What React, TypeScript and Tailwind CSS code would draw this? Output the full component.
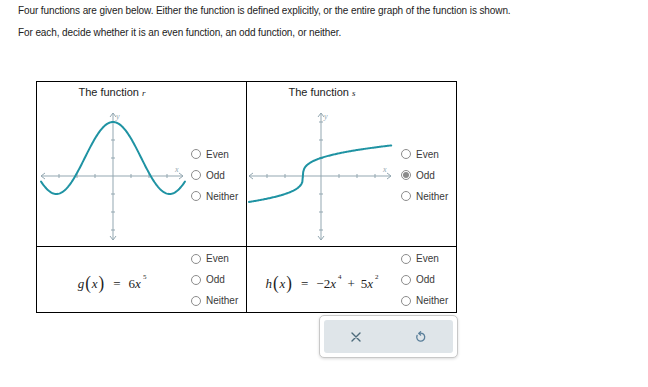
import React from "react";

const AXIS = "#93a7b1";
const CURVE = "#1f93a3";

function curvePath(f: (x: number) => number, ox: number, oy: number, from: number, to: number) {
  const pts: string[] = [];
  const steps = 160;
  for (let i = 0; i <= steps; i++) {
    const x = from + ((to - from) * i) / steps;
    const y = f(x);
    pts.push(`${(ox + x * 18).toFixed(2)},${(oy - y * 18).toFixed(2)}`);
  }
  return "M" + pts.join(" L");
}

function Graph({ ox, fn, from, to }: { ox: number; fn: (x: number) => number; from: number; to: number }) {
  const oy = 72;
  const ticks = [-3, -2, -1, 1, 2, 3];
  return (
    <svg width="150" height="142" viewBox="0 0 150 142" className="block shrink-0">
      <g stroke={AXIS} strokeWidth="1" fill="none">
        <line x1={ox - 72} y1={oy} x2={ox + 70} y2={oy} />
        <line x1={ox} y1={9} x2={ox} y2={136} />
        <polyline points={`${ox - 68},${oy - 3} ${ox - 72},${oy} ${ox - 68},${oy + 3}`} />
        <polyline points={`${ox + 66},${oy - 3} ${ox + 70},${oy} ${ox + 66},${oy + 3}`} />
        <polyline points={`${ox - 3},${13} ${ox},${9} ${ox + 3},${13}`} />
        <polyline points={`${ox - 3},${132} ${ox},${136} ${ox + 3},${132}`} />
        {ticks.map((t) => (
          <line key={"x" + t} x1={ox + t * 18} y1={oy - 2} x2={ox + t * 18} y2={oy + 2} />
        ))}
        {ticks.map((t) => (
          <line key={"y" + t} x1={ox - 2} y1={oy - t * 18} x2={ox + 2} y2={oy - t * 18} />
        ))}
      </g>
      <text x={ox + 3} y={15} fontSize="8" fontStyle="italic" fill={AXIS} fontFamily="Liberation Serif, serif">
        y
      </text>
      <text x={ox + 62} y={oy - 4} fontSize="8" fontStyle="italic" fill={AXIS} fontFamily="Liberation Serif, serif">
        x
      </text>
      <path d={curvePath(fn, ox, oy, from, to)} stroke={CURVE} strokeWidth="2" fill="none" strokeLinecap="round" />
    </svg>
  );
}

function Radios({ selected }: { selected?: string }) {
  return (
    <div className="flex flex-col gap-[8px] ml-[4px]">
      {["Even", "Odd", "Neither"].map((o) => (
        <label key={o} className="flex items-center gap-[5px] h-[13px] text-[10px] text-[#3a3a3a]">
          <span className="w-[10px] h-[10px] rounded-full border border-[#8c8c8c] bg-white flex items-center justify-center">
            {selected === o && <span className="w-[6px] h-[6px] rounded-full bg-[#8a8a8a]" />}
          </span>
          {o}
        </label>
      ))}
    </div>
  );
}

function Title({ name }: { name: string }) {
  return (
    <div className="w-[150px] h-[22px] pt-[3px] text-center text-[11px] leading-[14px] text-[#222]">
      The function{" "}
      <span className="italic text-[9px]" style={{ fontFamily: "'Liberation Serif', serif" }}>
        {name}
      </span>
    </div>
  );
}

const serif = { fontFamily: "'Liberation Serif', serif" };

function Paren({ c }: { c: string }) {
  return <span className="text-[17px] mx-[1px] inline-block scale-y-110">{c}</span>;
}

function Sup({ n }: { n: string }) {
  return <sup className="text-[7px] relative -top-[9px] ml-[2px]">{n}</sup>;
}

export default function App() {
  return (
    <div className="w-[648px] h-[387px] bg-white pl-[18px] pt-[4px] text-[#222]" style={{ fontFamily: "'Liberation Sans', Arial, sans-serif" }}>
      <p className="text-[10px] leading-[14px] tracking-[-0.1px]">
        Four functions are given below. Either the function is defined explicitly, or the entire graph of the function is shown.
      </p>
      <p className="text-[10px] leading-[14px] mt-[8px] tracking-[-0.1px]">
        For each, decide whether it is an even function, an odd function, or neither.
      </p>

      <div className="ml-[18px] mt-[41px] w-[421px]">
        <div className="grid grid-cols-[210px_209px] border border-black">
          <div className="h-[165px] border-r border-b border-black">
            <Title name="r" />
            <div className="flex items-center">
              <Graph ox={76} fn={(x) => 2 * Math.cos(x) + 1} from={-4} to={4} />
              <Radios />
            </div>
          </div>
          <div className="h-[165px] border-b border-black">
            <Title name="s" />
            <div className="flex items-center">
              <Graph ox={74} fn={(x) => Math.cbrt(x + 1)} from={-4} to={3.9} />
              <Radios selected="Odd" />
            </div>
          </div>
          <div className="h-[65px] border-r border-black flex items-center">
            <div className="w-[150px] text-center text-[13px] text-[#222] pt-[7px] whitespace-nowrap" style={serif}>
              <i>g</i>
              <Paren c="(" />
              <i>x</i>
              <Paren c=")" />
              <span className="mx-[8px]">=</span>6<i>x</i>
              <Sup n="5" />
            </div>
            <Radios />
          </div>
          <div className="h-[65px] flex items-center">
            <div className="w-[150px] text-center text-[13px] text-[#222] pt-[7px] whitespace-nowrap" style={serif}>
              <i>h</i>
              <Paren c="(" />
              <i>x</i>
              <Paren c=")" />
              <span className="mx-[8px]">=</span>−2<i>x</i>
              <Sup n="4" />
              <span className="mx-[6px]">+</span>5<i>x</i>
              <Sup n="2" />
            </div>
            <Radios />
          </div>
        </div>

        <div className="flex justify-end mt-[2px] -mr-[1px]">
          <div className="w-[139px] h-[43px] border border-[#c8c8c8] rounded-[5px] bg-white p-[4px] shadow-[0_1px_3px_rgba(0,0,0,0.15)]">
            <div className="h-full rounded-[3px] bg-[#dfe5e9] flex">
              <button className="flex-1 flex items-center justify-center">
                <svg width="10" height="10" viewBox="0 0 10 10">
                  <path d="M1 1 L9 9 M9 1 L1 9" stroke="#4d6b7b" strokeWidth="1.4" strokeLinecap="round" />
                </svg>
              </button>
              <button className="flex-1 flex items-center justify-center">
                <svg width="11" height="12" viewBox="0 0 11 12">
                  <path d="M4.2 2.4 A4 4 0 1 1 2.1 4.4" stroke="#5a7f9a" strokeWidth="1.3" fill="none" strokeLinecap="round" />
                  <path d="M5.6 0.8 L3.8 2.4 L5.6 4" stroke="#5a7f9a" strokeWidth="1.3" fill="none" strokeLinecap="round" strokeLinejoin="round" />
                </svg>
              </button>
            </div>
          </div>
        </div>
      </div>
    </div>
  );
}
